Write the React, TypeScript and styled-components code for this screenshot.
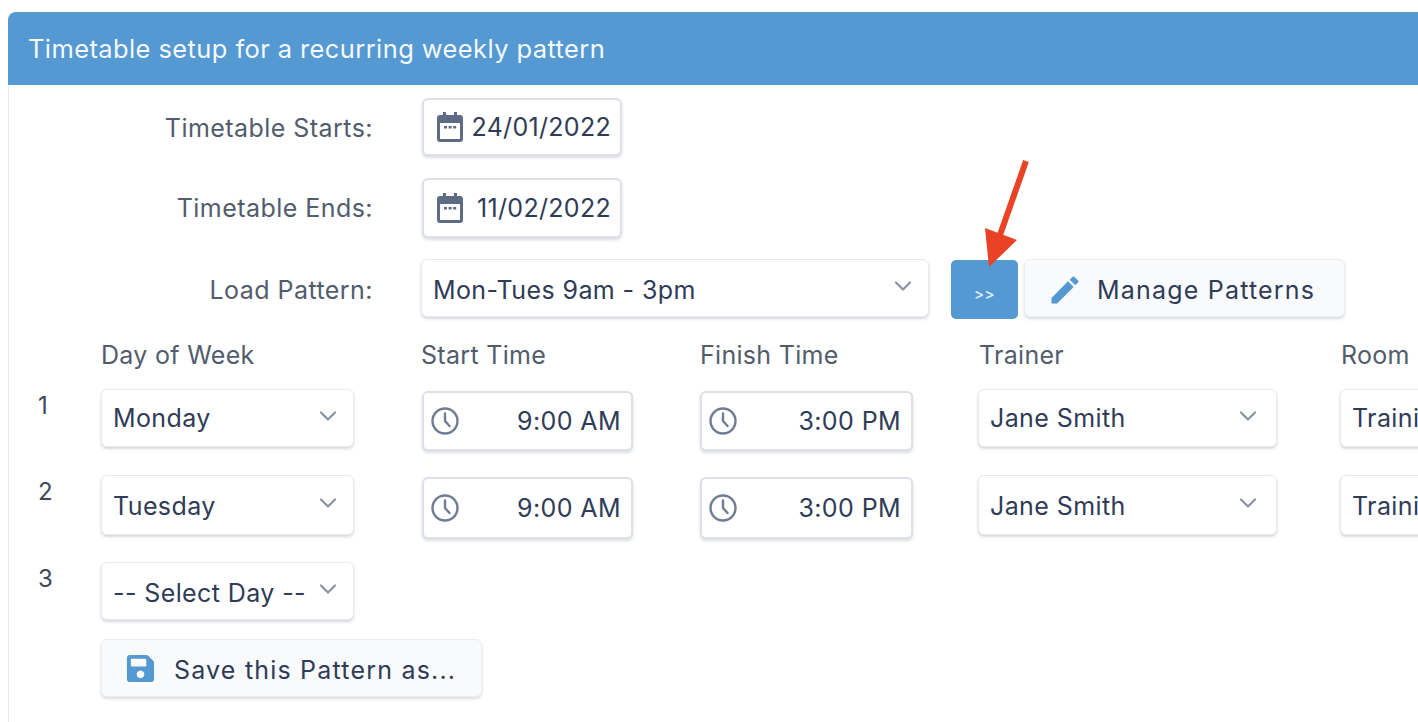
import React from "react";
import styled, { createGlobalStyle } from "styled-components";
import { MdEdit } from "react-icons/md";
import { FaSave } from "react-icons/fa";

const Global = createGlobalStyle`
  html, body { margin: 0; padding: 0; background: #fff; overflow: hidden; }
  body { font-family: Inter, "Liberation Sans", sans-serif; color: #2f3b57; }
  #root { width: 1418px; height: 722px; overflow: hidden; position: relative; }
`;

const Page = styled.div`
  padding: 12px 0 0 8px;
  width: 1600px;
`;

const Card = styled.section`
  box-shadow: inset 1px 0 0 #e6e8ec;
  border-radius: 8px 0 0 0;
  height: 710px;
`;

const Header = styled.header`
  height: 73px;
  background: #5499d2;
  border-radius: 8px 0 0 0;
  display: flex;
  align-items: center;
  padding: 0 0 0 20px;
  box-sizing: border-box;
  color: #f4f8fc;
  font-size: 25.5px;
  letter-spacing: 0.4px;
`;

const Body = styled.div`
  padding-top: 13px;
`;

const FormRow = styled.div<{ $mb: number }>`
  display: flex;
  align-items: center;
  margin-bottom: ${(p) => p.$mb}px;
`;

const FieldLabel = styled.label<{ $dy?: number }>`
  width: 365px;
  margin: ${(p) => (p.$dy ?? 0) * 2}px 48px 0 0;
  text-align: right;
  font-size: 25px;
  letter-spacing: 0.45px;
  color: #515c6d;
`;

const Box = styled.div`
  box-sizing: border-box;
  background: #fff;
  border-radius: 6px;
  display: flex;
  align-items: center;
  font-size: 25px;
  letter-spacing: 0.4px;
  color: #2f3b57;
`;

const DateBox = styled(Box)<{ $h: number }>`
  width: 200px;
  height: ${(p) => p.$h}px;
  margin-left: 1px;
  border: 2px solid #dde0e6;
  box-shadow: 0 2px 3px rgba(50, 60, 80, 0.18);
  padding: 0 9px 0 12px;
  letter-spacing: 0.3px;
  justify-content: space-between;
`;

const SelectBox = styled(Box)<{ $w: number; $h: number; $inset?: number; $pr?: number }>`
  width: ${(p) => p.$w}px;
  height: ${(p) => p.$h}px;
  margin-left: ${(p) => p.$inset ?? 0}px;
  border: 1px solid #e8eaee;
  box-shadow: 0 2px 3px rgba(50, 60, 80, 0.2);
  padding: 0 ${(p) => p.$pr ?? 15}px 0 11px;
  justify-content: space-between;
  white-space: nowrap;
  flex: none;
`;

const SelectValue = styled.span<{ $dy?: number }>`
  margin-top: ${(p) => (p.$dy ?? 0) * 2}px;
`;

const TimeBox = styled(Box)<{ $w: number; $h: number; $inset: number }>`
  width: ${(p) => p.$w}px;
  height: ${(p) => p.$h}px;
  margin: 2px 0 0 ${(p) => p.$inset}px;
  border: 2px solid #dde0e6;
  box-shadow: 0 2px 3px rgba(50, 60, 80, 0.18);
  padding: 0 10px 0 6px;
  justify-content: space-between;
`;

const GoButton = styled.button`
  width: 67px;
  height: 59px;
  margin: 1px 0 -2px 22px;
  border: 0;
  border-radius: 5px;
  background: #5499d2;
  color: #dbe9f5;
  font: 600 15px Inter, "Liberation Sans", sans-serif;
  letter-spacing: 0.5px;
  padding: 8px 0 0;
`;

const SoftButton = styled.button<{ $w: number; $ml: number; $pl: number; $gap: number }>`
  box-sizing: border-box;
  width: ${(p) => p.$w}px;
  height: 58px;
  margin-left: ${(p) => p.$ml}px;
  background: #f9fafb;
  border: 1px solid #eceef1;
  border-radius: 6px;
  box-shadow: 0 2px 3px rgba(50, 60, 80, 0.18);
  display: flex;
  align-items: center;
  gap: ${(p) => p.$gap}px;
  padding: 0 0 0 ${(p) => p.$pl}px;
  font: 25px Inter, "Liberation Sans", sans-serif;
  letter-spacing: 1.2px;
  color: #2f3b57;
  white-space: nowrap;
  flex: none;
`;

const ButtonText = styled.span`
  margin-top: 4px;
`;

const EditIcon = styled(MdEdit)`
  margin-top: 4px;
`;

const Grid = styled.div`
  display: grid;
  grid-template-columns: 63px 320px 279px 279px 362px 300px;
  padding-left: 30px;
  margin-top: 24px;
  align-items: start;
`;

const Heading = styled.div`
  font-size: 25px;
  letter-spacing: 0.3px;
  line-height: 28px;
  color: #515c6d;
  margin-bottom: 20px;
`;

const Num = styled.div<{ $mb: number }>`
  font-size: 24px;
  line-height: 34px;
  color: #3d4759;
  margin-bottom: ${(p) => p.$mb - 2}px;
`;

const Cell = styled.div<{ $mb: number }>`
  margin-bottom: ${(p) => p.$mb}px;
`;

const SaveRow = styled.div`
  padding-left: 93px;
`;

const Chevron = styled.svg`
  width: 20px;
  height: 20px;
  flex: none;
  color: #8a93a3;
  margin-top: -4px;
`;

const Overlay = styled.svg`
  position: absolute;
  left: 980px;
  top: 155px;
`;

const ChevronIcon = () => (
  <Chevron viewBox="0 0 20 20" fill="none" stroke="currentColor" strokeWidth="2.2" strokeLinecap="round" strokeLinejoin="round">
    <path d="M3 6.5 10 13.5 17 6.5" />
  </Chevron>
);

const CalendarIcon = () => (
  <svg width="28" height="32" viewBox="0 0 28 32" style={{ flex: "none" }}>
    <path
      fill="#5e6b84"
      d="M7 1h3v3h8V1h3v3h3a3 3 0 0 1 3 3v21a3 3 0 0 1-3 3H4a3 3 0 0 1-3-3V7a3 3 0 0 1 3-3h3zM4 12v16h20V12z"
    />
    <path fill="#5e6b84" d="M8 15h3v2.6H8zM12.6 15h3v2.6h-3zM17.2 15h3v2.6h-3z" />
  </svg>
);

const ClockIcon = () => (
  <svg width="30" height="30" viewBox="0 0 30 30" fill="none" stroke="#6f7c94" strokeWidth="2.4" strokeLinecap="round" strokeLinejoin="round" style={{ flex: "none" }}>
    <circle cx="15" cy="15" r="12.5" />
    <path d="M15 7.5V15l4.5 5" />
  </svg>
);

const DateField = ({ h, value }: { h: number; value: string }) => (
  <DateBox $h={h}>
    <CalendarIcon />
    <span>{value}</span>
  </DateBox>
);

const Select = ({ w, h, inset, pr, dy, value }: { w: number; h: number; inset?: number; pr?: number; dy?: number; value: string }) => (
  <SelectBox $w={w} $h={h} $inset={inset} $pr={pr}>
    <SelectValue $dy={dy}>{value}</SelectValue>
    <ChevronIcon />
  </SelectBox>
);

const Time = ({ w, h, inset, value }: { w: number; h: number; inset: number; value: string }) => (
  <TimeBox $w={w} $h={h} $inset={inset}>
    <ClockIcon />
    <span>{value}</span>
  </TimeBox>
);

const rows = [
  { n: 1, day: "Monday", dy: 0, gap: 24, sh: 58, th: 60 },
  { n: 2, day: "Tuesday", dy: 1, gap: 23, sh: 60, th: 62 },
];

export default function App() {
  return (
    <>
      <Global />
      <Page>
        <Card>
          <Header>Timetable setup for a recurring weekly pattern</Header>
          <Body>
            <FormRow $mb={22}>
              <FieldLabel $dy={1}>Timetable Starts:</FieldLabel>
              <DateField h={58} value="24/01/2022" />
            </FormRow>
            <FormRow $mb={21}>
              <FieldLabel>Timetable Ends:</FieldLabel>
              <DateField h={60} value="11/02/2022" />
            </FormRow>
            <FormRow $mb={0}>
              <FieldLabel $dy={2}>Load Pattern:</FieldLabel>
              <Select w={508} h={58} dy={2} value="Mon-Tues 9am - 3pm" />
              <GoButton>&gt;&gt;</GoButton>
              <SoftButton $w={321} $ml={6} $pl={22} $gap={14}>
                <EditIcon size={36} color="#5499d2" />
                <ButtonText>Manage Patterns</ButtonText>
              </SoftButton>
            </FormRow>
            <Grid>
              <Heading />
              <Heading>Day of Week</Heading>
              <Heading>Start Time</Heading>
              <Heading>Finish Time</Heading>
              <Heading>Trainer</Heading>
              <Heading>Room</Heading>
              {rows.map((r) => (
                <React.Fragment key={r.n}>
                  <Num $mb={r.gap}>{r.n}</Num>
                  <Cell $mb={r.gap}>
                    <Select w={253} h={r.sh} dy={r.dy} value={r.day} />
                  </Cell>
                  <Cell $mb={r.gap}>
                    <Time w={211} h={r.th} inset={1} value="9:00 AM" />
                  </Cell>
                  <Cell $mb={r.gap}>
                    <Time w={213} h={r.th} inset={0} value="3:00 PM" />
                  </Cell>
                  <Cell $mb={r.gap}>
                    <Select w={299} h={r.sh} inset={-1} pr={18} dy={r.dy} value="Jane Smith" />
                  </Cell>
                  <Cell $mb={r.gap}>
                    <Select w={299} h={r.sh} inset={-1} dy={r.dy} value="Training Room" />
                  </Cell>
                </React.Fragment>
              ))}
              <Num $mb={19}>3</Num>
              <Cell $mb={19}>
                <Select w={253} h={58} dy={2} value="-- Select Day --" />
              </Cell>
            </Grid>
            <SaveRow>
              <SoftButton $w={381} $ml={0} $pl={23} $gap={18}>
                <FaSave size={31} color="#5499d2" />
                <ButtonText>Save this Pattern as...</ButtonText>
              </SoftButton>
            </SaveRow>
          </Body>
        </Card>
      </Page>
      <Overlay width="60" height="120" viewBox="980 155 60 120">
        <path d="M1026 161 1000 235" stroke="#ea4225" strokeWidth="6" fill="none" />
        <path d="M985 228 1017 240 989 267z" fill="#ea4225" />
      </Overlay>
    </>
  );
}
